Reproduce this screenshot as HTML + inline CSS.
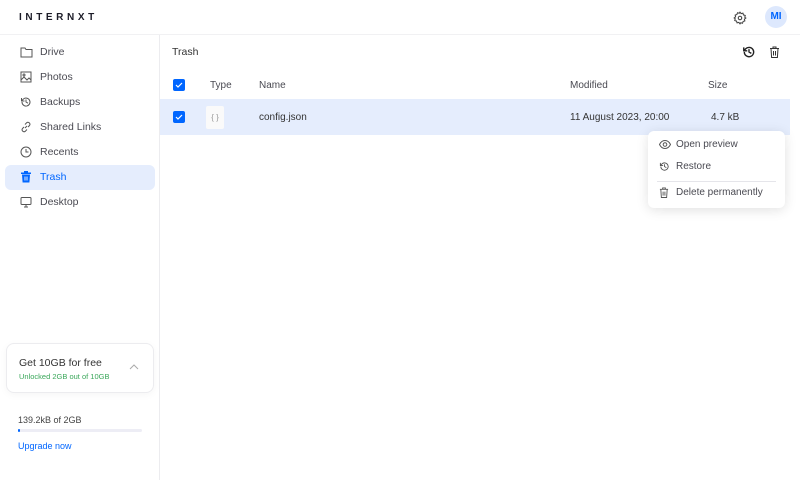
<!DOCTYPE html>
<html><head><style>
*{box-sizing:border-box;margin:0;padding:0}
body{width:800px;height:480px;overflow:hidden;background:#fff;font-family:"Liberation Sans",sans-serif;color:#3a3a3f;position:relative;font-size:10px}
.abs{position:absolute}
.hdr{left:0;top:0;width:800px;height:35px;border-bottom:1px solid #f1f1f3}
.logo{left:19px;top:12px;font-size:10px;font-weight:bold;letter-spacing:3.6px;color:#1c1c28}
.side{left:0;top:35px;width:160px;height:445px;border-right:1px solid #ececef}
.nav{position:absolute;left:5px;width:150px;height:25px;border-radius:6px;font-size:10.5px;color:#4a4a52;padding-left:35px;line-height:25px}
.nav svg{position:absolute;left:15px;top:6px}
.nav.sel{background:#e5edfd;color:#0066ff}
.cb{width:12px;height:12px;background:#0066ff;border-radius:2px}
.cb svg{display:block}
.th{font-size:10px;color:#4a4a52}
.menu{left:648px;top:131px;width:137px;height:77px;background:#fff;border-radius:6px;box-shadow:0 2px 12px rgba(0,0,0,.12)}
.mi{position:absolute;left:28px;font-size:10px;color:#4a4a52}
</style></head><body>
<div class="abs hdr"></div>
<div class="abs logo" style="top:12px">INTERNXT</div>
<svg class="abs" style="left:733px;top:11px" width="14" height="14" viewBox="0 0 24 24" fill="none" stroke="#444" stroke-width="1.8"><circle cx="12" cy="12" r="3"/><path d="M12 2l2 2.5 3-.8 1 3 3 1-.8 3L22 12l-2.5 2 .8 3-3 1-1 3-3-.8L12 22l-2-2.5-3 .8-1-3-3-1 .8-3L2 12l2.5-2-.8-3 3-1 1-3 3 .8z"/></svg>
<div class="abs" style="left:765px;top:6px;width:22px;height:22px;border-radius:11px;background:#dde8fd;color:#0066ff;font-size:10px;font-weight:bold;text-align:center;line-height:22px;padding-top:0">MI</div>

<div class="abs side">
<div class="nav" style="top:5px"><svg width="13" height="12" viewBox="0 0 13 12" fill="none" stroke="#555" stroke-width="1"><path d="M1 2h4l1 1.5h6v7.5H1z"/></svg>Drive</div>
<div class="nav" style="top:30px"><svg width="12" height="12" viewBox="0 0 12 12" fill="none" stroke="#555" stroke-width="1"><rect x="1" y="1" width="10" height="10"/><path d="M1 9l3-3 3 3 2-2 2 2"/><circle cx="4" cy="4" r="1"/></svg>Photos</div>
<div class="nav" style="top:55px"><svg width="12" height="12" viewBox="0 0 12 12" fill="none" stroke="#555" stroke-width="1"><path d="M2 6a4 4 0 1 0 1.2-2.8L1.5 5M1.5 2v3h3M6 3.5V6l2 1.2"/></svg>Backups</div>
<div class="nav" style="top:80px"><svg width="12" height="12" viewBox="0 0 12 12" fill="none" stroke="#555" stroke-width="1"><path d="M5 7l2-2M4 6L2.5 7.5a2 2 0 0 0 2.8 2.8L7 8.5M8 6l1.5-1.5a2 2 0 0 0-2.8-2.8L5 3.5"/></svg>Shared Links</div>
<div class="nav" style="top:105px"><svg width="12" height="12" viewBox="0 0 12 12" fill="none" stroke="#555" stroke-width="1"><circle cx="6" cy="6" r="5"/><path d="M6 3v3h2.5"/></svg>Recents</div>
<div class="nav sel" style="top:130px"><svg width="12" height="12" viewBox="0 0 12 12"><rect x="1" y="1.5" width="10" height="1.5" fill="#0066ff"/><rect x="4" y="0" width="4" height="2" fill="#0066ff"/><path d="M2 3.5h8l-.6 8H2.6z" fill="#0066ff"/><path d="M5 5.5v4M7 5.5v4" stroke="#fff" stroke-width=".9"/></svg>Trash</div>
<div class="nav" style="top:155px"><svg width="12" height="12" viewBox="0 0 12 12" fill="none" stroke="#555" stroke-width="1"><rect x="1" y="1.5" width="10" height="7" rx="1"/><path d="M4 11h4M6 8.5V11"/></svg>Desktop</div>
<div class="abs" style="left:6px;top:308px;width:148px;height:50px;border:1px solid #ececef;border-radius:8px;box-shadow:0 2px 8px rgba(0,0,0,.04)">
<div class="abs" style="left:12px;top:13px;font-size:10.5px;color:#333">Get 10GB for free</div>
<div class="abs" style="left:12px;top:28px;font-size:7.5px;color:#3aa75a">Unlocked 2GB out of 10GB</div>
<svg class="abs" style="left:122px;top:20px" width="10" height="6" viewBox="0 0 10 6" fill="none" stroke="#aaa" stroke-width="1"><path d="M1 5l4-4 4 4"/></svg>
</div>
<div class="abs" style="left:18px;top:380px;font-size:9px;color:#444">139.2kB of 2GB</div>
<div class="abs" style="left:18px;top:394px;width:124px;height:3px;border-radius:2px;background:#ededf5"><div style="width:2px;height:3px;background:#0066ff;border-radius:2px"></div></div>
<div class="abs" style="left:18px;top:406px;font-size:9px;color:#0066ff">Upgrade now</div>
</div>

<div class="abs" style="left:172px;top:46px;font-size:10.5px;color:#333">Trash</div>
<svg class="abs" style="left:742px;top:45px" width="14" height="14" viewBox="0 0 12 12" fill="none" stroke="#222" stroke-width="1.2"><path d="M2 6a4 4 0 1 0 1.2-2.8L1.5 5M1.5 2v3h3M6 3.5V6l2 1.2"/></svg>
<svg class="abs" style="left:769px;top:46px" width="11" height="12" viewBox="0 0 11 12" fill="none" stroke="#333" stroke-width="1"><path d="M1 2.5h9M4 2.5V1h3v1.5M2 2.5l.6 9h5.8l.6-9M4.5 5v4.5M6.5 5v4.5"/></svg>

<div class="abs cb" style="left:173px;top:79px"><svg width="12" height="12" viewBox="0 0 12 12" fill="none" stroke="#fff" stroke-width="1.2"><path d="M3 6l2 2 4-4"/></svg></div>
<div class="abs th" style="left:210px;top:80px">Type</div>
<div class="abs th" style="left:259px;top:80px">Name</div>
<div class="abs th" style="left:570px;top:80px">Modified</div>
<div class="abs th" style="left:708px;top:80px">Size</div>
<div class="abs" style="left:160px;top:99px;width:630px;height:36px;background:#e5edfd"></div>
<div class="abs cb" style="left:173px;top:111px"><svg width="12" height="12" viewBox="0 0 12 12" fill="none" stroke="#fff" stroke-width="1.2"><path d="M3 6l2 2 4-4"/></svg></div>
<div class="abs" style="left:206px;top:106px;width:18px;height:23px;background:#fafafa;border-radius:2px;font-size:8px;color:#999;text-align:center;line-height:23px">{ }</div>
<div class="abs" style="left:259px;top:112px;font-size:10px;color:#333">config.json</div>
<div class="abs" style="left:570px;top:112px;font-size:10px;color:#333">11 August 2023, 20:00</div>
<div class="abs" style="left:711px;top:112px;font-size:10px;color:#333">4.7 kB</div>

<div class="abs menu">
<svg class="abs" style="left:11px;top:9px" width="12" height="9" viewBox="0 0 12 9" fill="none" stroke="#555" stroke-width="1"><path d="M.5 4.5C2 1.5 4 .5 6 .5s4 1 5.5 4c-1.5 3-3.5 4-5.5 4s-4-1-5.5-4z"/><circle cx="6" cy="4.5" r="1.8"/></svg>
<div class="mi" style="top:8px">Open preview</div>
<svg class="abs" style="left:11px;top:30px" width="11" height="11" viewBox="0 0 12 12" fill="none" stroke="#555" stroke-width="1"><path d="M2 6a4 4 0 1 0 1.2-2.8L1.5 5M1.5 2v3h3M6 3.5V6l2 1.2"/></svg>
<div class="mi" style="top:30px">Restore</div>
<div class="abs" style="left:9px;top:50px;width:119px;height:1px;background:#e5e5ea"></div>
<svg class="abs" style="left:11px;top:56px" width="10" height="11" viewBox="0 0 11 12" fill="none" stroke="#555" stroke-width="1"><path d="M1 2.5h9M4 2.5V1h3v1.5M2 2.5l.6 9h5.8l.6-9M4.5 5v4.5M6.5 5v4.5"/></svg>
<div class="mi" style="top:56px">Delete permanently</div>
</div>
</body></html>
